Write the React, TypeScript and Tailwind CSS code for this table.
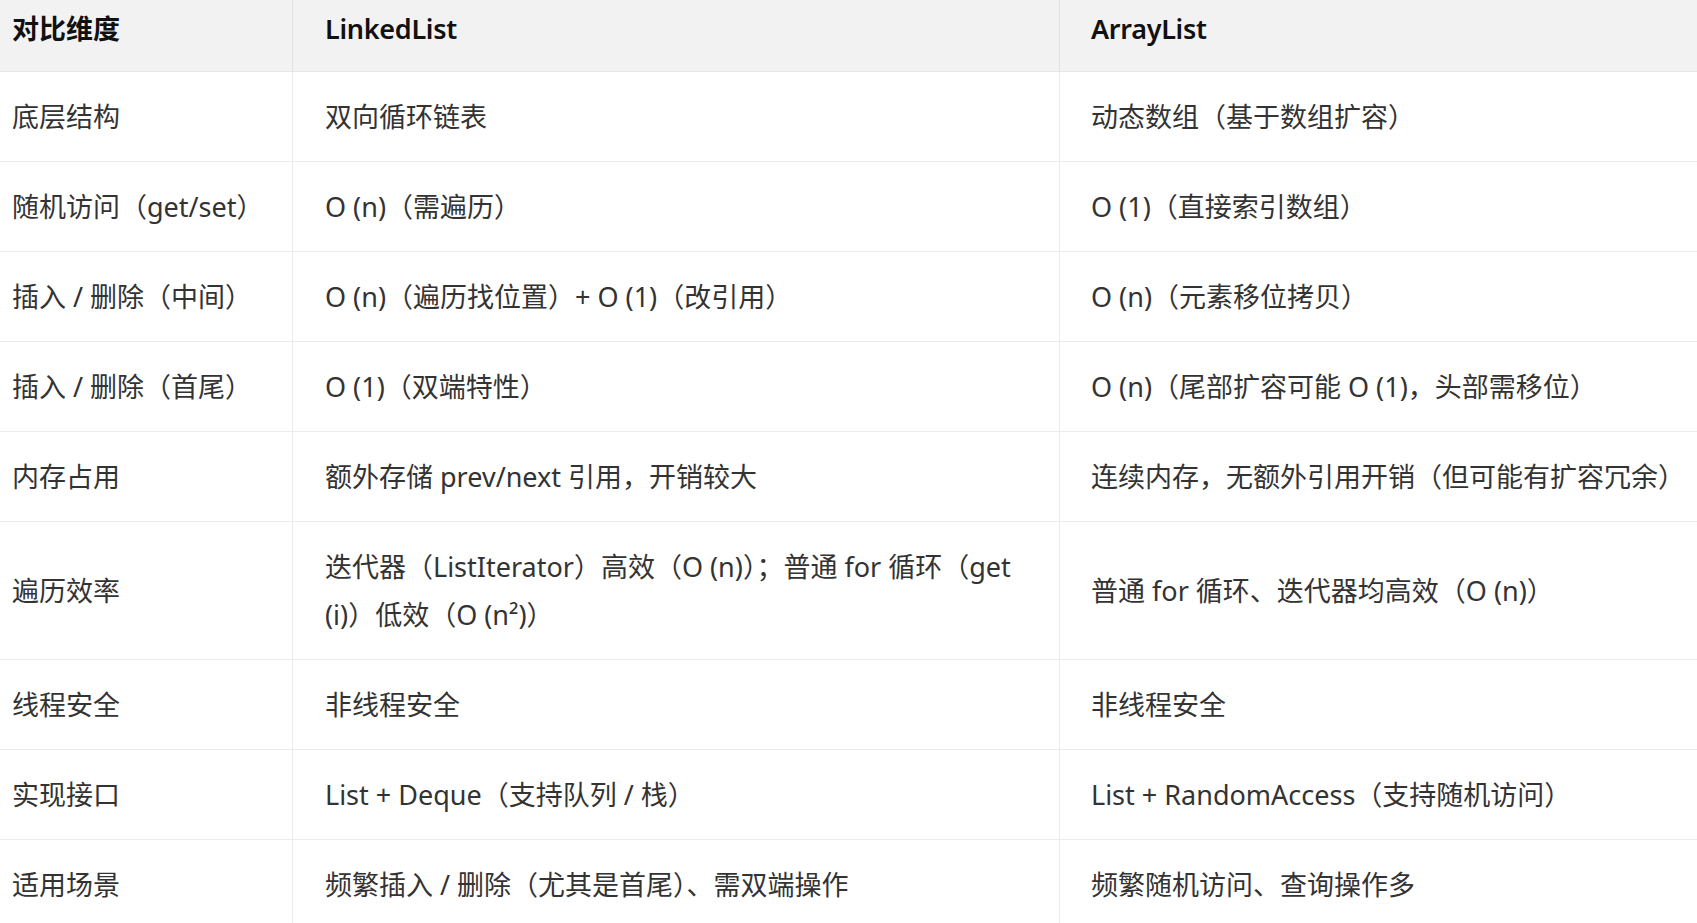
import React from 'react'

const rows: [string, React.ReactNode, string][] = [
  ['底层结构', '双向循环链表', '动态数组（基于数组扩容）'],
  ['随机访问（get/set）', 'O (n)（需遍历）', 'O (1)（直接索引数组）'],
  ['插入 / 删除（中间）', 'O (n)（遍历找位置）+ O (1)（改引用）', 'O (n)（元素移位拷贝）'],
  ['插入 / 删除（首尾）', 'O (1)（双端特性）', 'O (n)（尾部扩容可能 O (1)，头部需移位）'],
  ['内存占用', '额外存储 prev/next 引用，开销较大', '连续内存，无额外引用开销（但可能有扩容冗余）'],
  [
    '遍历效率',
    <>
      迭代器（ListIterator）高效（O (n)）；普通 for 循环（get
      <br />
      (i)）低效（O (n²)）
    </>,
    '普通 for 循环、迭代器均高效（O (n)）',
  ],
  ['线程安全', '非线程安全', '非线程安全'],
  ['实现接口', 'List + Deque（支持队列 / 栈）', 'List + RandomAccess（支持随机访问）'],
  ['适用场景', '频繁插入 / 删除（尤其是首尾）、需双端操作', '频繁随机访问、查询操作多'],
]

const grid = 'grid grid-cols-[292px_767px_minmax(0,1fr)]'

export default function App() {
  return (
    <div
      className="w-[1697px] h-[923px] overflow-hidden bg-white text-[27px] leading-[48px] text-[#333]"
      style={{ fontFamily: '"Noto Sans", "Noto Sans CJK SC", sans-serif' }}
    >
      {/* 表头 */}
      <div className={`${grid} h-[72px] bg-[#f2f2f2] border-b border-[#e6e6e6] font-semibold text-[#111]`}>
        <div className="pl-[12px] pt-[5px] whitespace-nowrap">对比维度</div>
        <div className="pl-[32px] pt-[5px] border-l border-[#e2e2e2] whitespace-nowrap tracking-[-0.3px]">LinkedList</div>
        <div className="pl-[31px] pt-[5px] border-l border-[#e2e2e2] whitespace-nowrap tracking-[-0.3px]">ArrayList</div>
      </div>

      {rows.map(([dim, linked, array], i) => (
        <div key={i} className={`${grid} border-b border-[#ebebeb]`}>
          <div className="pl-[12px] pt-[21px] pb-[20px] flex items-center whitespace-nowrap">{dim}</div>
          <div className="pl-[32px] pr-[20px] pt-[21px] pb-[20px] flex items-center border-l border-[#ebebeb] whitespace-nowrap">
            <div>{linked}</div>
          </div>
          <div className="pl-[31px] pt-[21px] pb-[20px] flex items-center border-l border-[#ebebeb] whitespace-nowrap">{array}</div>
        </div>
      ))}
    </div>
  )
}
